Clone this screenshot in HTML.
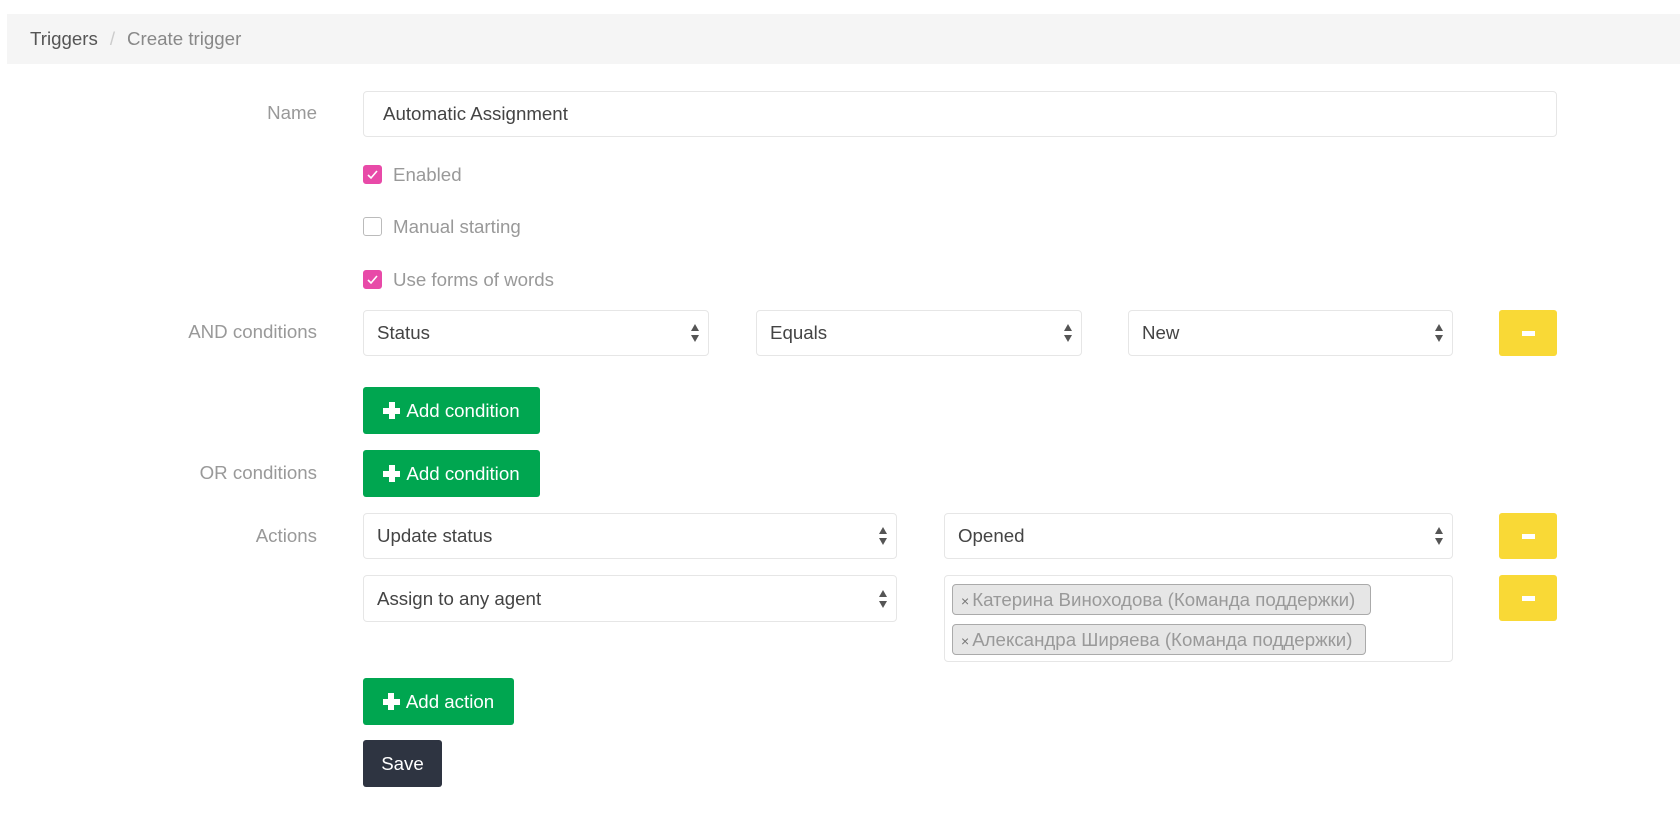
<!DOCTYPE html>
<html><head><meta charset="utf-8"><style>
*{box-sizing:border-box;margin:0;padding:0}
body{width:1680px;height:814px;background:#fff;font-family:"Liberation Sans",Arial,sans-serif;position:relative;overflow:hidden}
.a{position:absolute}
.bc{left:7px;top:14px;width:1673px;height:50px;background:#f5f5f5;font-size:18.7px;line-height:50px;padding-left:23px;color:#555}
.bc .s{color:#ccc;margin:0 12px}
.bc .c{color:#888}
.lbl{right:1363px;font-size:18.7px;color:#999;text-align:right;white-space:nowrap}
.inp{border:1px solid #e6e6e6;border-radius:4px;background:#fff;font-size:18.7px;color:#444;padding-left:13px;display:flex;align-items:center}
.sel::after{content:"";position:absolute;right:9px;top:50%;margin-top:-9px;width:0;height:0;border-left:4px solid transparent;border-right:4px solid transparent;border-bottom:7px solid #555}
.sel::before{content:"";position:absolute;right:9px;top:50%;margin-top:2px;width:0;height:0;border-left:4px solid transparent;border-right:4px solid transparent;border-top:7px solid #555}
.cb{width:19px;height:19px;border-radius:3px;border:1px solid #bbb;background:#fff}
.cb.on{background:#e84aa8;border-color:#e84aa8}
.cbl{font-size:18.7px;color:#999}
.min{width:58px;height:46px;background:#f9d936;border-radius:3px}
.min::after{content:"";position:absolute;left:23px;top:21px;width:13px;height:5px;background:#fff}
.btn{background:#00a650;color:#fff;border-radius:3px;font-size:18.7px;display:flex;align-items:center;justify-content:center;height:47px}
.pl{display:inline-block;position:relative;width:17px;height:17px;margin-right:6px}
.pl::before{content:"";position:absolute;left:5.5px;top:0;width:6px;height:17px;background:#fff}
.pl::after{content:"";position:absolute;left:0;top:5.5px;width:17px;height:6px;background:#fff}
.tag{background:#e6e6e6;border:1px solid #aaa;border-radius:4px;font-size:18.7px;color:#999;height:31px;line-height:29px;padding-left:8px;white-space:nowrap;overflow:hidden}
.tag b{font-weight:normal;color:#777;font-size:14px;margin-right:3px}
</style></head><body>
<div class="a bc">Triggers<span class="s">/</span><span class="c">Create trigger</span></div>

<div class="a lbl" style="top:102px">Name</div>
<div class="a inp" style="left:363px;top:91px;width:1194px;height:46px;padding-left:19px">Automatic Assignment</div>

<div class="a cb on" style="left:363px;top:165px"><svg width="17" height="17" viewBox="0 0 17 17"><path d="M4 9l3 3 6-7" stroke="#fff" stroke-width="1.6" fill="none"/></svg></div>
<div class="a cbl" style="left:393px;top:164px">Enabled</div>
<div class="a cb" style="left:363px;top:217px"></div>
<div class="a cbl" style="left:393px;top:216px">Manual starting</div>
<div class="a cb on" style="left:363px;top:270px"><svg width="17" height="17" viewBox="0 0 17 17"><path d="M4 9l3 3 6-7" stroke="#fff" stroke-width="1.6" fill="none"/></svg></div>
<div class="a cbl" style="left:393px;top:269px">Use forms of words</div>

<div class="a lbl" style="top:321px">AND conditions</div>
<div class="a inp sel" style="left:363px;top:310px;width:346px;height:46px">Status</div>
<div class="a inp sel" style="left:756px;top:310px;width:326px;height:46px">Equals</div>
<div class="a inp sel" style="left:1128px;top:310px;width:325px;height:46px">New</div>
<div class="a min" style="left:1499px;top:310px"></div>

<div class="a btn" style="left:363px;top:387px;width:177px"><span class="pl"></span>Add condition</div>
<div class="a lbl" style="top:462px">OR conditions</div>
<div class="a btn" style="left:363px;top:450px;width:177px"><span class="pl"></span>Add condition</div>

<div class="a lbl" style="top:525px">Actions</div>
<div class="a inp sel" style="left:363px;top:513px;width:534px;height:46px">Update status</div>
<div class="a inp sel" style="left:944px;top:513px;width:509px;height:46px">Opened</div>
<div class="a min" style="left:1499px;top:513px"></div>

<div class="a inp sel" style="left:363px;top:575px;width:534px;height:47px">Assign to any agent</div>
<div class="a inp" style="left:944px;top:575px;width:509px;height:87px"></div>
<div class="a tag" style="left:952px;top:584px;width:419px"><b>×</b>Катерина Виноходова (Команда поддержки)</div>
<div class="a tag" style="left:952px;top:624px;width:414px"><b>×</b>Александра Ширяева (Команда поддержки)</div>
<div class="a min" style="left:1499px;top:575px"></div>

<div class="a btn" style="left:363px;top:678px;width:151px"><span class="pl"></span>Add action</div>
<div class="a btn" style="left:363px;top:740px;width:79px;background:#2e3441">Save</div>
</body></html>
